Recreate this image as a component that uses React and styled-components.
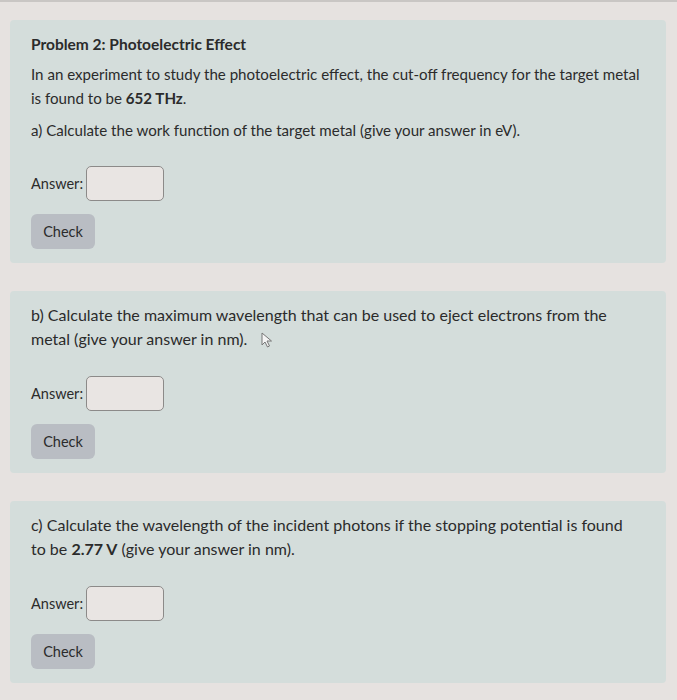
import React from 'react';
import styled, { createGlobalStyle } from 'styled-components';

const GlobalStyle = createGlobalStyle`
  body {
    margin: 0;
    background: #e6e2e0;
    font-family: Lato, "Open Sans", sans-serif;
    color: #2b2b2b;
  }
`;

const Page = styled.div`
  width: 677px;
  height: 700px;
  box-sizing: border-box;
  padding: 18px 11px 0 10px;
  border-top: 2px solid #c9c6c4;
  display: flex;
  flex-direction: column;
  gap: 28px;
`;

const Card = styled.section`
  background: #d4dddb;
  border-radius: 4px;
  padding: 12px 21px 14px;
  display: flex;
  flex-direction: column;
`;

const Title = styled.h3`
  margin: 0 0 6px;
  font-size: 15.5px;
  line-height: 24px;
  font-weight: 700;
`;

const Text = styled.p`
  margin: 0 0 ${({ $gap }) => $gap || 0}px;
  font-size: ${({ $size }) => $size || 15.1}px;
  line-height: 24px;
  white-space: nowrap;
`;

const AnswerRow = styled.div`
  display: flex;
  align-items: center;
  gap: 3px;
  margin-top: ${({ $top }) => $top}px;
  font-size: 14.5px;
`;

const Input = styled.div`
  width: 76px;
  height: 33px;
  border: 1px solid #8c8a89;
  border-radius: 5px;
  background: #e9e5e3;
`;

const Button = styled.button`
  align-self: flex-start;
  margin-top: 13px;
  width: 64px;
  height: 35px;
  border: none;
  border-radius: 6px;
  background: #b9bdc3;
  color: #2b2b2b;
  font-family: inherit;
  font-size: 14.5px;
  padding: 0;
`;

const Cursor = () => (
  <svg width="14" height="16" viewBox="0 0 14 16" style={{ marginLeft: 14, verticalAlign: -3 }}>
    <path d="M1 1 L1 13 L4 10 L6.5 15 L8.5 14 L6 9 L10.5 9 Z" fill="#f4f4f4" stroke="#777" strokeWidth="1" strokeLinejoin="round" />
  </svg>
);

function Answer({ top }) {
  return (
    <>
      <AnswerRow $top={top}>
        <span>Answer:</span>
        <Input />
      </AnswerRow>
      <Button>Check</Button>
    </>
  );
}

export default function App() {
  return (
    <>
      <GlobalStyle />
      <Page>
        <Card>
          <Title>Problem 2: Photoelectric Effect</Title>
          <Text $gap={8}>
            In an experiment to study the photoelectric effect, the cut-off frequency for the target metal
            <br />
            is found to be <b>652 THz</b>.
          </Text>
          <Text>a) Calculate the work function of the target metal (give your answer in eV).</Text>
          <Answer top={24} />
        </Card>
        <Card>
          <Text $size={16}>
            b) Calculate the maximum wavelength that can be used to eject electrons from the
            <br />
            metal (give your answer in nm).<Cursor />
          </Text>
          <Answer top={25} />
        </Card>
        <Card>
          <Text $size={16}>
            c) Calculate the wavelength of the incident photons if the stopping potential is found
            <br />
            to be <b>2.77 V</b> (give your answer in nm).
          </Text>
          <Answer top={25} />
        </Card>
      </Page>
    </>
  );
}
